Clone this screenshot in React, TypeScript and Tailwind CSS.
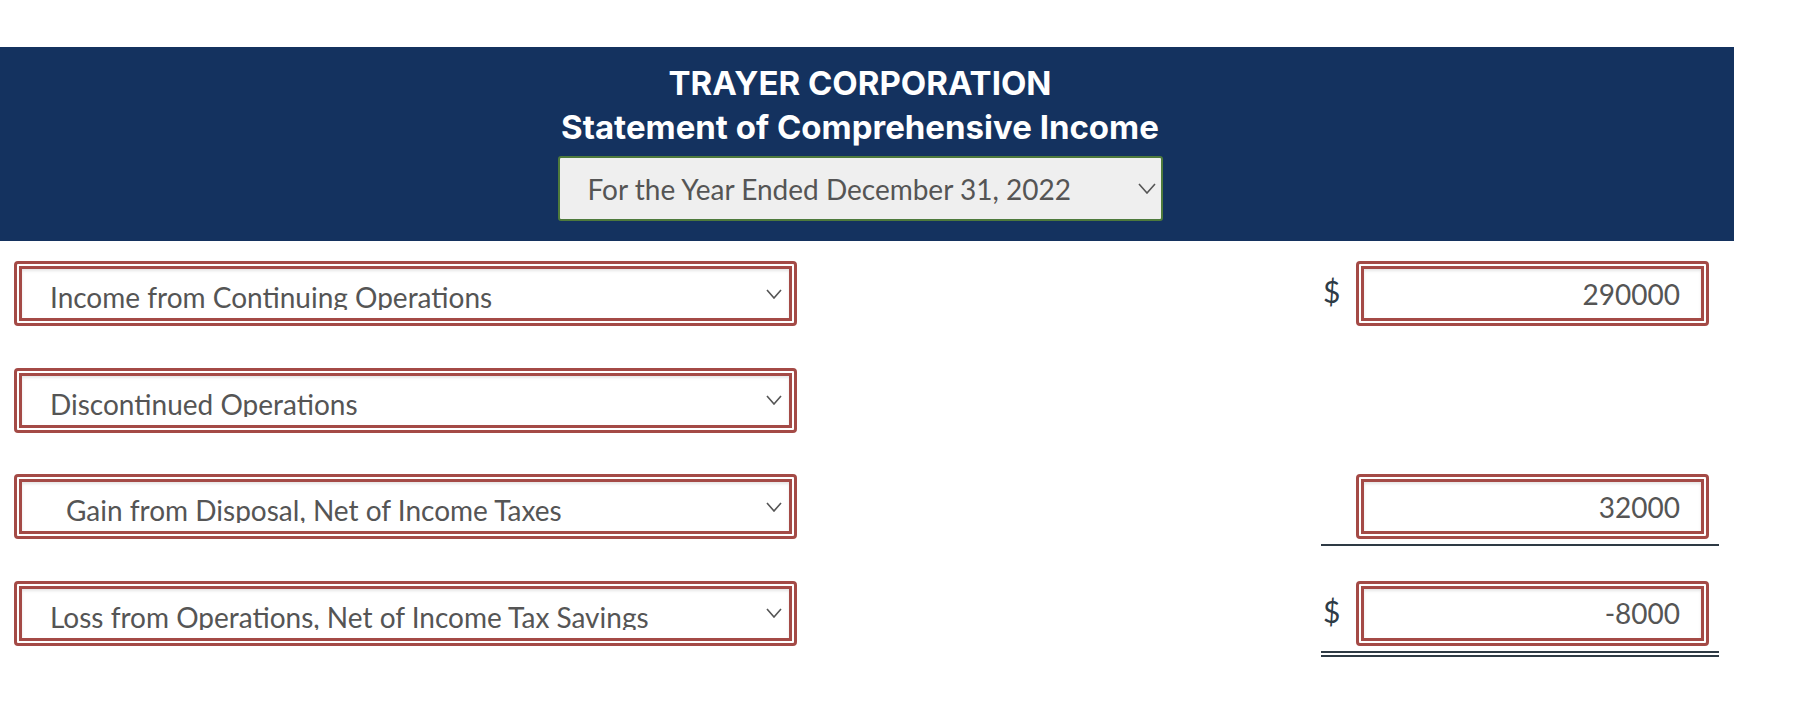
import React from "react";

const font = { fontFamily: "Lato, 'Open Sans', sans-serif" };
const titleFont = { fontFamily: "Inter, 'Open Sans', sans-serif" };

function Chevron({ w = 16, h = 8 }: { w?: number; h?: number }) {
  return (
    <svg width={w} height={h + 2} viewBox={`0 0 ${w} ${h + 2}`} fill="none">
      <polyline
        points={`1,1 ${w / 2},${h + 1} ${w - 1},1`}
        stroke="#555"
        strokeWidth="1.6"
      />
    </svg>
  );
}

// double red border used by every field on the sheet
function RedBox({
  children,
  className = "",
}: {
  children: React.ReactNode;
  className?: string;
}) {
  return (
    <div
      className={`h-[65px] rounded-[4px] border-[3px] border-[#a44a46] bg-white p-[2px] ${className}`}
    >
      <div className="flex h-full border-[3px] border-[#a44a46] bg-white shadow-[inset_0_2px_3px_rgba(0,0,0,0.10)]">
        {children}
      </div>
    </div>
  );
}

function LabelSelect({ label, indent }: { label: string; indent?: boolean }) {
  return (
    <RedBox className="w-[783px]">
      <div
        className={`h-[41px] flex-1 overflow-hidden pt-[11px] text-[28px] leading-[34px] text-[#555] ${indent ? "pl-[44px]" : "pl-[28px]"}`}
      >
        {label}
      </div>
      <div className="flex items-center pr-[7px]">
        <Chevron />
      </div>
    </RedBox>
  );
}

function Amount({ value, dollar }: { value: string; dollar?: boolean }) {
  return (
    <div className="flex items-center">
      <div className="w-[35px] pb-[5px] pl-[2px] text-[30px] leading-none text-[#2e3b46]">
        {dollar ? "$" : ""}
      </div>
      <RedBox className="w-[353px]">
        <div className="flex flex-1 items-center justify-end pr-[21px] text-[28px] leading-[34px] text-[#555]">
          {value}
        </div>
      </RedBox>
    </div>
  );
}

type Row = {
  label: string;
  indent?: boolean;
  value?: string;
  dollar?: boolean;
  rule?: "single" | "double";
};

const rows: Row[] = [
  { label: "Income from Continuing Operations", value: "290000", dollar: true },
  { label: "Discontinued Operations" },
  {
    label: "Gain from Disposal, Net of Income Taxes",
    indent: true,
    value: "32000",
    rule: "single",
  },
  {
    label: "Loss from Operations, Net of Income Tax Savings",
    value: "-8000",
    dollar: true,
    rule: "double",
  },
];

export default function App() {
  return (
    <div className="min-h-screen bg-white pt-[47px]" style={font}>
      <div className="h-[194px] w-[1734px] bg-[#14325f] pr-[14px] pt-[14px]">
        <div className="flex flex-col items-center">
          <div
            className="text-[33px] font-bold leading-[44px] text-white"
            style={titleFont}
          >
            TRAYER CORPORATION
          </div>
          <div
            className="text-[33px] font-bold leading-[44px] text-white"
            style={titleFont}
          >
            Statement of Comprehensive Income
          </div>
          <div className="mt-[7px] flex h-[65px] w-[605px] items-center justify-between rounded-[3px] border-2 border-[#4e7a3c] bg-[#efefef] pl-[28px] pr-[5px]">
            <span className="text-[28px] text-[#555]">
              For the Year Ended December 31, 2022
            </span>
            <Chevron w={18} h={9} />
          </div>
        </div>
      </div>

      <div className="flex flex-col pt-[20px]">
        {rows.map((r, i) => (
          <div key={i} className="flex h-[106.67px] items-start pl-[14px]">
            <LabelSelect label={r.label} indent={r.indent} />
            <div className="ml-auto mr-[81px] w-[398px]">
              {r.value !== undefined && (
                <div className="flex flex-col">
                  <Amount value={r.value} dollar={r.dollar} />
                  {r.rule === "single" && (
                    <div className="mt-[5px] h-[2px] bg-[#2e3a44]" />
                  )}
                  {r.rule === "double" && (
                    <div className="mt-[5px] flex flex-col gap-[2px]">
                      <div className="h-[2px] bg-[#2e3a44]" />
                      <div className="h-[2px] bg-[#2e3a44]" />
                    </div>
                  )}
                </div>
              )}
            </div>
          </div>
        ))}
      </div>
    </div>
  );
}
